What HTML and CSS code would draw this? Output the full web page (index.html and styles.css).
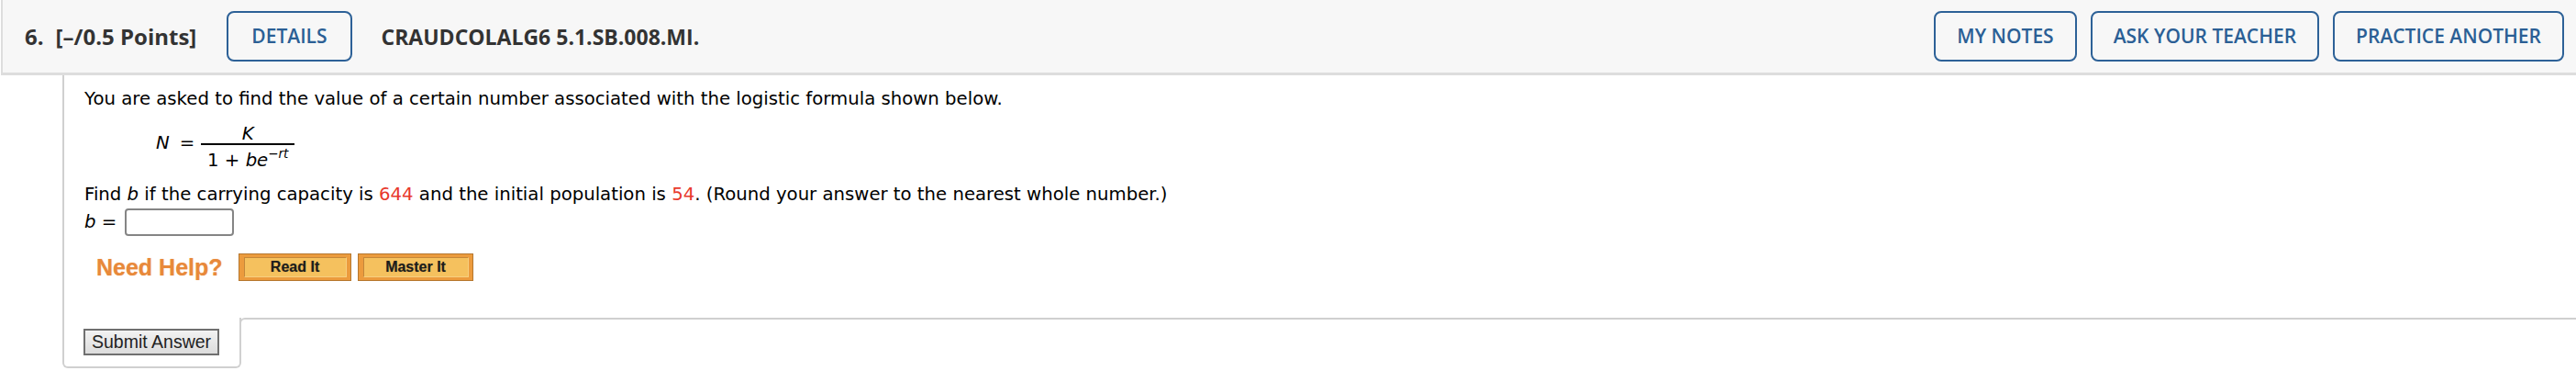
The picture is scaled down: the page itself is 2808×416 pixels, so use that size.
FILE: index.html
```html
<!DOCTYPE html>
<html>
<head>
<meta charset="utf-8">
<link rel="stylesheet" href="styles.css">
</head>
<body>
<div class="question">
  <div class="qhead">
    <span class="qnum">6.</span>
    <span class="pts">[–/0.5 Points]</span>
    <button class="hbtn details">DETAILS</button>
    <span class="qtitle">CRAUDCOLALG6 5.1.SB.008.MI.</span>
    <div class="hactions">
      <button class="hbtn">MY NOTES</button>
      <button class="hbtn">ASK YOUR TEACHER</button>
      <button class="hbtn">PRACTICE ANOTHER</button>
    </div>
  </div>
  <div class="qbody">
    <p class="line">You are asked to find the value of a certain number associated with the logistic formula shown below.</p>
    <div class="formula">
      <span class="lhs"><i>N</i><span class="eq">=</span></span>
      <span class="frac">
        <span class="num"><i>K</i></span>
        <span class="bar"></span>
        <span class="den">1 + <i>be</i><sup class="exp">−<i>rt</i></sup></span>
      </span>
    </div>
    <p class="line find">Find <i>b</i> if the carrying capacity is <span class="red">644</span> and the initial population is <span class="red">54</span>. (Round your answer to the nearest whole number.)</p>
    <div class="answer">
      <span class="alabel"><i>b</i> =</span>
      <input class="ainput" type="text">
    </div>
    <div class="help">
      <span class="needhelp">Need Help?</span>
      <button class="hlpbtn read"><span class="hlpin">Read It</span></button>
      <button class="hlpbtn master"><span class="hlpin">Master It</span></button>
    </div>
  </div>
  <div class="qfoot">
    <div class="tab"><button class="submit">Submit Answer</button></div>
    <div class="filler"></div>
  </div>
</div>
</body>
</html>
```

FILE: styles.css
```css
html, body {
  margin: 0;
  padding: 0;
  background: #ffffff;
  overflow: hidden;
}

.question {
  width: 2808px;
}

.qhead {
  margin-left: 1px;
  height: 82px;
  box-sizing: border-box;
  background: #f7f7f7;
  border-left: 2px solid #dddddd;
  border-bottom: 3px solid #dddddd;
  display: flex;
  align-items: center;
  padding-left: 24px;
  padding-right: 13px;
  font-family: "Open Sans", "Liberation Sans", sans-serif;
  color: #333333;
}

.qnum {
  font-weight: 700;
  font-size: 24px;
  margin-right: 13px;
}

.pts {
  font-weight: 700;
  font-size: 24px;
  margin-right: 33px;
}

.qtitle {
  font-weight: 700;
  font-size: 23px;
  margin-left: 32px;
}

.hbtn {
  height: 55px;
  box-sizing: border-box;
  padding: 0 23px;
  border: 2px solid #2d6197;
  border-radius: 8px;
  background: #f7f7f7;
  color: #2b5f95;
  font-family: "Open Sans", "Liberation Sans", sans-serif;
  font-weight: 600;
  font-size: 21px;
  line-height: 1;
}

.details {
  padding: 0 25px;
}

.hactions {
  margin-left: auto;
  display: flex;
  gap: 15px;
}

.qbody {
  margin-left: 68px;
  margin-right: -4px;
  border-left: 2px solid #d0d0d0;
  border-right: 2px solid #d0d0d0;
  padding: 13px 0 40px 22px;
  font-family: "DejaVu Sans", Verdana, sans-serif;
  font-size: 19.7px;
  color: #000000;
}

.line {
  margin: 0;
  line-height: 25px;
}

.red {
  color: #e8392c;
}

.formula {
  display: flex;
  align-items: flex-start;
  margin: 16px 0 0 78px;
}

.lhs {
  margin-top: 10px;
  line-height: 20px;
  display: flex;
}

.eq {
  margin: 0 7px 0 11px;
}

.frac {
  display: flex;
  flex-direction: column;
  align-items: center;
  width: 102px;
}

.num {
  line-height: 20px;
}

.bar {
  align-self: stretch;
  height: 2px;
  background: #000000;
}

.den {
  margin-top: 5px;
  line-height: 24px;
  white-space: nowrap;
}

.exp {
  font-size: 13.5px;
  line-height: 0;
  vertical-align: 9px;
}

.find {
  margin-top: 12px;
}

.answer {
  margin-top: 3px;
  display: flex;
  align-items: center;
}

.alabel {
  line-height: 20px;
  margin-right: 9px;
}

.ainput {
  width: 119px;
  height: 30px;
  box-sizing: border-box;
  border: 2px solid #858585;
  border-radius: 4px;
  padding: 0;
  margin: 0;
  background: #ffffff;
}

.help {
  margin: 19px 0 0 13px;
  display: flex;
  align-items: center;
  gap: 7px;
}

.needhelp {
  font-family: "Liberation Sans", Arial, sans-serif;
  font-weight: 700;
  font-size: 25px;
  color: #e8893a;
  text-shadow: 0 0 1px rgba(232, 137, 58, 0.6);
  margin-right: 10px;
}

.hlpbtn {
  height: 30px;
  box-sizing: border-box;
  border: 1px solid #b5772f;
  background: #ec9b3d;
  padding: 3px 4px 3px 5px;
  margin: 0;
  display: flex;
}

.read {
  width: 123px;
}

.master {
  width: 126px;
}

.hlpin {
  flex: 1;
  display: flex;
  align-items: center;
  justify-content: center;
  border: 1px solid #c4873a;
  border-right-color: #f7cf80;
  border-bottom-color: #f7cf80;
  background: #f5c15e;
  font-family: "Liberation Sans", Arial, sans-serif;
  font-weight: 700;
  font-size: 16px;
  color: #1c1c1c;
  text-shadow: 0 0 1px rgba(0, 0, 0, 0.35);
}

.qfoot {
  display: flex;
  margin-left: 68px;
}

.tab {
  border-left: 2px solid #d0d0d0;
  border-right: 2px solid #d0d0d0;
  border-bottom: 2px solid #d0d0d0;
  border-bottom-left-radius: 6px;
  border-bottom-right-radius: 6px;
  padding: 12px 22px 12px 21px;
  display: flex;
}

.filler {
  flex: 1;
  margin-left: -2px;
  height: 8px;
  border-top: 2px solid #d0d0d0;
  border-left: 2px solid #d0d0d0;
  border-top-left-radius: 6px;
}

.submit {
  height: 29px;
  box-sizing: border-box;
  border: 2px solid #707070;
  background: linear-gradient(#f2f2f2, #dcdcdc);
  padding: 0 7px;
  margin: 0;
  font-family: "Liberation Sans", Arial, sans-serif;
  font-size: 19.5px;
  color: #222222;
  line-height: 1;
}
```
